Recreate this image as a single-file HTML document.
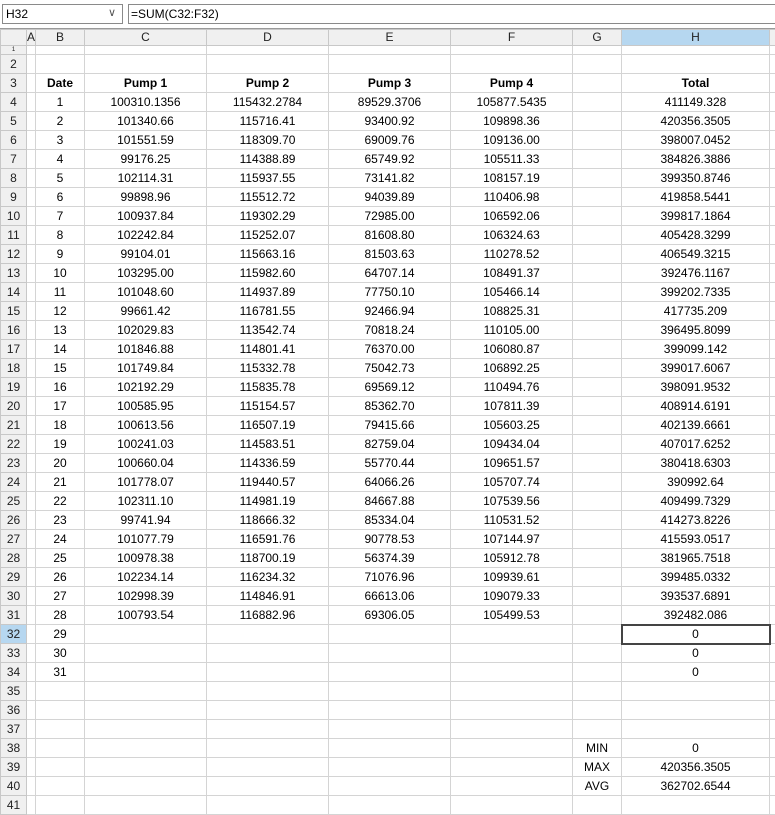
<!DOCTYPE html>
<html><head><meta charset="utf-8"><style>
body{margin:0;width:775px;height:804px;overflow:hidden;background:#fff;font-family:"Liberation Sans",Arial,sans-serif;font-size:12px;color:#000;position:relative}
.tb{position:absolute;left:0;top:0;width:775px;height:28px;background:#fff;border-bottom:1px solid #9a9a9a}
.nb{position:absolute;left:2px;top:4px;width:121px;height:20px;border:1px solid #8a8a8a;box-sizing:border-box;padding:2px 3px;line-height:14px}
.nb span{position:absolute;right:6px;top:1px;color:#555;font-size:11px}
.fb{position:absolute;left:128px;top:4px;width:660px;height:20px;border:1px solid #8a8a8a;box-sizing:border-box;padding:2px 2px;line-height:14px}
table{position:absolute;left:0;top:29px;border-collapse:collapse;table-layout:fixed;width:789px}
td{border:1px solid #d4d4d4;padding:0;text-align:center;white-space:nowrap;overflow:hidden;height:18px;line-height:18px}
td.h{background:#f0f0f0;border-color:#c8c8c8;color:#222}
tr.ch td{height:15px;line-height:15px}
tr.r1 td{height:8px;line-height:8px;font-size:6px}
td.sel{background:#b6d7f0}
td.bold{font-weight:bold}
td.act{outline:2px solid #444;outline-offset:-1px}
</style></head><body>
<div class="tb"><div class="nb">H32<span>&#8744;</span></div><div class="fb">=SUM(C32:F32)</div></div>
<table>
<colgroup><col style="width:26px"><col style="width:9px"><col style="width:49px"><col style="width:122px"><col style="width:122px"><col style="width:122px"><col style="width:122px"><col style="width:49px"><col style="width:148px"><col style="width:20px"></colgroup>
<tr class="ch"><td class="h"></td><td class="h">A</td><td class="h">B</td><td class="h">C</td><td class="h">D</td><td class="h">E</td><td class="h">F</td><td class="h">G</td><td class="h sel">H</td><td class="h"></td></tr>
<tr class="r1"><td class="h">1</td><td></td><td></td><td></td><td></td><td></td><td></td><td></td><td></td><td></td></tr>
<tr><td class="h">2</td><td></td><td></td><td></td><td></td><td></td><td></td><td></td><td></td><td></td></tr>
<tr><td class="h">3</td><td></td><td class="bold">Date</td><td class="bold">Pump 1</td><td class="bold">Pump 2</td><td class="bold">Pump 3</td><td class="bold">Pump 4</td><td></td><td class="bold">Total</td><td></td></tr>
<tr><td class="h">4</td><td></td><td>1</td><td>100310.1356</td><td>115432.2784</td><td>89529.3706</td><td>105877.5435</td><td></td><td>411149.328</td><td></td></tr>
<tr><td class="h">5</td><td></td><td>2</td><td>101340.66</td><td>115716.41</td><td>93400.92</td><td>109898.36</td><td></td><td>420356.3505</td><td></td></tr>
<tr><td class="h">6</td><td></td><td>3</td><td>101551.59</td><td>118309.70</td><td>69009.76</td><td>109136.00</td><td></td><td>398007.0452</td><td></td></tr>
<tr><td class="h">7</td><td></td><td>4</td><td>99176.25</td><td>114388.89</td><td>65749.92</td><td>105511.33</td><td></td><td>384826.3886</td><td></td></tr>
<tr><td class="h">8</td><td></td><td>5</td><td>102114.31</td><td>115937.55</td><td>73141.82</td><td>108157.19</td><td></td><td>399350.8746</td><td></td></tr>
<tr><td class="h">9</td><td></td><td>6</td><td>99898.96</td><td>115512.72</td><td>94039.89</td><td>110406.98</td><td></td><td>419858.5441</td><td></td></tr>
<tr><td class="h">10</td><td></td><td>7</td><td>100937.84</td><td>119302.29</td><td>72985.00</td><td>106592.06</td><td></td><td>399817.1864</td><td></td></tr>
<tr><td class="h">11</td><td></td><td>8</td><td>102242.84</td><td>115252.07</td><td>81608.80</td><td>106324.63</td><td></td><td>405428.3299</td><td></td></tr>
<tr><td class="h">12</td><td></td><td>9</td><td>99104.01</td><td>115663.16</td><td>81503.63</td><td>110278.52</td><td></td><td>406549.3215</td><td></td></tr>
<tr><td class="h">13</td><td></td><td>10</td><td>103295.00</td><td>115982.60</td><td>64707.14</td><td>108491.37</td><td></td><td>392476.1167</td><td></td></tr>
<tr><td class="h">14</td><td></td><td>11</td><td>101048.60</td><td>114937.89</td><td>77750.10</td><td>105466.14</td><td></td><td>399202.7335</td><td></td></tr>
<tr><td class="h">15</td><td></td><td>12</td><td>99661.42</td><td>116781.55</td><td>92466.94</td><td>108825.31</td><td></td><td>417735.209</td><td></td></tr>
<tr><td class="h">16</td><td></td><td>13</td><td>102029.83</td><td>113542.74</td><td>70818.24</td><td>110105.00</td><td></td><td>396495.8099</td><td></td></tr>
<tr><td class="h">17</td><td></td><td>14</td><td>101846.88</td><td>114801.41</td><td>76370.00</td><td>106080.87</td><td></td><td>399099.142</td><td></td></tr>
<tr><td class="h">18</td><td></td><td>15</td><td>101749.84</td><td>115332.78</td><td>75042.73</td><td>106892.25</td><td></td><td>399017.6067</td><td></td></tr>
<tr><td class="h">19</td><td></td><td>16</td><td>102192.29</td><td>115835.78</td><td>69569.12</td><td>110494.76</td><td></td><td>398091.9532</td><td></td></tr>
<tr><td class="h">20</td><td></td><td>17</td><td>100585.95</td><td>115154.57</td><td>85362.70</td><td>107811.39</td><td></td><td>408914.6191</td><td></td></tr>
<tr><td class="h">21</td><td></td><td>18</td><td>100613.56</td><td>116507.19</td><td>79415.66</td><td>105603.25</td><td></td><td>402139.6661</td><td></td></tr>
<tr><td class="h">22</td><td></td><td>19</td><td>100241.03</td><td>114583.51</td><td>82759.04</td><td>109434.04</td><td></td><td>407017.6252</td><td></td></tr>
<tr><td class="h">23</td><td></td><td>20</td><td>100660.04</td><td>114336.59</td><td>55770.44</td><td>109651.57</td><td></td><td>380418.6303</td><td></td></tr>
<tr><td class="h">24</td><td></td><td>21</td><td>101778.07</td><td>119440.57</td><td>64066.26</td><td>105707.74</td><td></td><td>390992.64</td><td></td></tr>
<tr><td class="h">25</td><td></td><td>22</td><td>102311.10</td><td>114981.19</td><td>84667.88</td><td>107539.56</td><td></td><td>409499.7329</td><td></td></tr>
<tr><td class="h">26</td><td></td><td>23</td><td>99741.94</td><td>118666.32</td><td>85334.04</td><td>110531.52</td><td></td><td>414273.8226</td><td></td></tr>
<tr><td class="h">27</td><td></td><td>24</td><td>101077.79</td><td>116591.76</td><td>90778.53</td><td>107144.97</td><td></td><td>415593.0517</td><td></td></tr>
<tr><td class="h">28</td><td></td><td>25</td><td>100978.38</td><td>118700.19</td><td>56374.39</td><td>105912.78</td><td></td><td>381965.7518</td><td></td></tr>
<tr><td class="h">29</td><td></td><td>26</td><td>102234.14</td><td>116234.32</td><td>71076.96</td><td>109939.61</td><td></td><td>399485.0332</td><td></td></tr>
<tr><td class="h">30</td><td></td><td>27</td><td>102998.39</td><td>114846.91</td><td>66613.06</td><td>109079.33</td><td></td><td>393537.6891</td><td></td></tr>
<tr><td class="h">31</td><td></td><td>28</td><td>100793.54</td><td>116882.96</td><td>69306.05</td><td>105499.53</td><td></td><td>392482.086</td><td></td></tr>
<tr><td class="h sel">32</td><td></td><td>29</td><td></td><td></td><td></td><td></td><td></td><td class="act">0</td><td></td></tr>
<tr><td class="h">33</td><td></td><td>30</td><td></td><td></td><td></td><td></td><td></td><td>0</td><td></td></tr>
<tr><td class="h">34</td><td></td><td>31</td><td></td><td></td><td></td><td></td><td></td><td>0</td><td></td></tr>
<tr><td class="h">35</td><td></td><td></td><td></td><td></td><td></td><td></td><td></td><td></td><td></td></tr>
<tr><td class="h">36</td><td></td><td></td><td></td><td></td><td></td><td></td><td></td><td></td><td></td></tr>
<tr><td class="h">37</td><td></td><td></td><td></td><td></td><td></td><td></td><td></td><td></td><td></td></tr>
<tr><td class="h">38</td><td></td><td></td><td></td><td></td><td></td><td></td><td>MIN</td><td>0</td><td></td></tr>
<tr><td class="h">39</td><td></td><td></td><td></td><td></td><td></td><td></td><td>MAX</td><td>420356.3505</td><td></td></tr>
<tr><td class="h">40</td><td></td><td></td><td></td><td></td><td></td><td></td><td>AVG</td><td>362702.6544</td><td></td></tr>
<tr><td class="h">41</td><td></td><td></td><td></td><td></td><td></td><td></td><td></td><td></td><td></td></tr>
</table>
</body></html>
